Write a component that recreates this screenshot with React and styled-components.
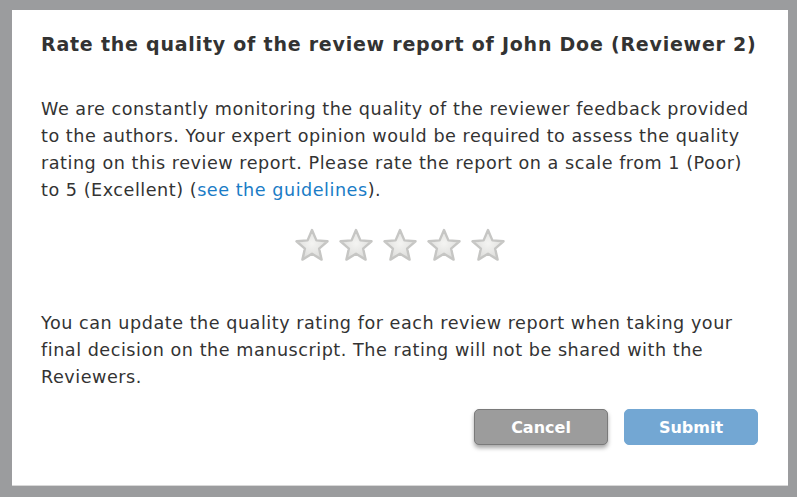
import React from 'react';
import styled, { createGlobalStyle } from 'styled-components';

const GlobalStyle = createGlobalStyle`
  html, body {
    margin: 0;
    padding: 0;
    background: #9b9c9e;
  }
  body {
    font-family: "DejaVu Sans", Verdana, sans-serif;
  }
`;

const Backdrop = styled.div`
  width: 797px;
  height: 497px;
  box-sizing: border-box;
  padding: 10px 9px 11px 12px;
  background: #9b9c9e;
`;

const Dialog = styled.div`
  width: 100%;
  height: 100%;
  box-sizing: border-box;
  background: #ffffff;
  border-bottom: 1px solid #d8d8d8;
  padding: 21px 29px 0 29px;
  display: flex;
  flex-direction: column;
  color: #333333;
`;

const Title = styled.h1`
  margin: 0;
  font-size: 19px;
  letter-spacing: 0.77px;
  font-weight: bold;
  line-height: 26px;
  color: #333333;
  white-space: nowrap;
`;

const Text = styled.p`
  margin: ${props => props.top}px 0 0 0;
  font-size: 17.6px;
  letter-spacing: 0.53px;
  line-height: 27px;
  color: #333333;
  white-space: nowrap;
`;

const Link = styled.a`
  color: #1a7cc6;
  text-decoration: none;
`;

const Stars = styled.div`
  display: flex;
  justify-content: center;
  gap: 8px;
  margin-top: 23px;
  height: 38px;
`;

const Actions = styled.div`
  display: flex;
  justify-content: flex-end;
  gap: 16px;
  margin-top: 18px;
  padding-right: 1px;
`;

const Button = styled.button`
  width: 134px;
  height: 36px;
  box-sizing: border-box;
  border-radius: 5px;
  font-family: "DejaVu Sans", Verdana, sans-serif;
  font-weight: bold;
  font-size: 16px;
  color: #ffffff;
  cursor: pointer;
  background: ${props => (props.primary ? '#73a7d3' : '#9c9c9c')};
  border: ${props => (props.primary ? '1px solid #73a7d3' : '1px solid #7a7a7a')};
  box-shadow: ${props => (props.primary ? 'none' : '0 3px 4px rgba(0, 0, 0, 0.35)')};
`;

function Star() {
  return (
    <svg width="36" height="38" viewBox="0 0 36 38">
      <defs>
        <radialGradient id="starFill" cx="50%" cy="45%" r="60%">
          <stop offset="0%" stopColor="#f4f4f2" />
          <stop offset="70%" stopColor="#e2e2e0" />
          <stop offset="100%" stopColor="#d4d4d2" />
        </radialGradient>
      </defs>
      <path
        d="M18 3 L22.4 13.4 L33.5 14.3 L25.1 21.6 L27.6 32.6 L18 26.8 L8.4 32.6 L10.9 21.6 L2.5 14.3 L13.6 13.4 Z"
        fill="url(#starFill)"
        stroke="#c6c6c4"
        strokeWidth="2.4"
        strokeLinejoin="round"
      />
    </svg>
  );
}

export default function App() {
  return (
    <>
      <GlobalStyle />
      <Backdrop>
        <Dialog>
          <Title>Rate the quality of the review report of John Doe (Reviewer 2)</Title>
          <Text top={39}>
            We are constantly monitoring the quality of the reviewer feedback provided<br />
            to the authors. Your expert opinion would be required to assess the quality<br />
            rating on this review report. Please rate the report on a scale from 1 (Poor)<br />
            to 5 (Excellent) (<Link href="#">see the guidelines</Link>).
          </Text>
          <Stars>
            {[1, 2, 3, 4, 5].map(n => <Star key={n} />)}
          </Stars>
          <Text top={45}>
            You can update the quality rating for each review report when taking your<br />
            final decision on the manuscript. The rating will not be shared with the<br />
            Reviewers.
          </Text>
          <Actions>
            <Button>Cancel</Button>
            <Button primary>Submit</Button>
          </Actions>
        </Dialog>
      </Backdrop>
    </>
  );
}
